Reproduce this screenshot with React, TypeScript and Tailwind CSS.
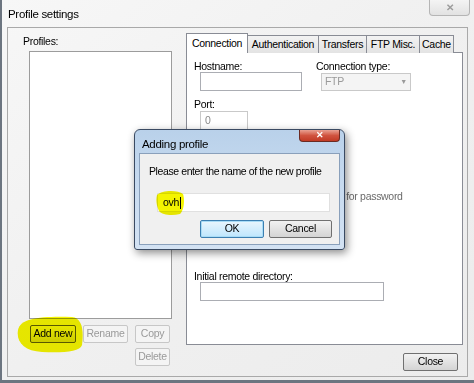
import React from "react";

const font = { fontFamily: '"Liberation Sans", Arial, sans-serif' };

const Field = ({ w, value = "", dim = false }: { w: string; value?: string; dim?: boolean }) => (
  <div
    className={`${w} h-[19px] bg-white border flex items-center pl-[4px] ${
      dim ? "border-[#c9c9c9] text-[#8a8a8a]" : "border-[#abadb3]"
    }`}
  >
    {value}
  </div>
);

const DisabledButton = ({ label, className = "" }: { label: string; className?: string }) => (
  <div
    className={`h-[18px] flex items-center justify-center rounded-[2px] border border-[#c7c7c7] bg-[#f4f4f4] text-[#9a9a9a] ${className}`}
  >
    {label}
  </div>
);

const tabs = ["Authentication", "Transfers", "FTP Misc.", "Cache"];
const tabWidths = ["w-[72px]", "w-[49px]", "w-[54px]", "w-[35px]"];

export default function App() {
  return (
    <div
      style={font}
      className="relative w-[474px] h-[383px] overflow-hidden bg-gradient-to-br from-[#f7f7f7] via-[#f0f0f0] to-[#ececec] border-l-[2px] border-b-[3px] border-[#6c7580] text-black text-[10.5px] tracking-[-0.3px]"
    >
      {/* title bar */}
      <div className="h-[27px] flex items-start justify-between">
        <div className="pl-[6px] pt-[7px] text-[11.5px] leading-[14px]">Profile settings</div>
        <div className="mr-[4px] w-[41px] h-[16px] rounded-b-[4px] border border-t-0 border-[#b5b5b5] bg-gradient-to-b from-[#f4f4f4] to-[#e2e2e2] flex items-center justify-center text-[10px] text-[#9c9c9c] font-bold">
          ✕
        </div>
      </div>

      {/* group frame */}
      <div className="ml-[5px] w-[461px] h-[350px] border border-[#a9a9a9] flex">
        {/* left column */}
        <div className="w-[172px] pl-[15px] pt-[7px] flex flex-col">
          <div className="leading-[13px]">Profiles:</div>
          <div className="ml-[6px] mt-[3px] w-[143px] h-[268px] bg-white border border-[#9c9c9c]" />
          <div className="ml-[7px] mt-[6px] grid grid-cols-[46px_45px_35px] gap-x-[7px] gap-y-[5px]">
            <div className="h-[18px] flex items-center justify-center rounded-[2px] border border-[#5c5c2c] bg-gradient-to-b from-[#f2f2f2] to-[#d6d6d6]">
              Add new
            </div>
            <DisabledButton label="Rename" />
            <DisabledButton label="Copy" />
            <DisabledButton label="Delete" className="col-start-3" />
          </div>
        </div>

        {/* right column */}
        <div className="ml-[6px] mt-[5px] w-[277px] flex flex-col">
          <div className="flex items-end h-[20px] relative z-10">
            <div className="w-[62px] h-[20px] bg-white border border-b-0 border-[#898c95] flex items-center justify-center">
              Connection
            </div>
            {tabs.map((t, i) => (
              <div
                key={t}
                className={`${tabWidths[i]} h-[18px] -ml-px first:ml-0 border border-b-0 border-[#898c95] bg-gradient-to-b from-[#f3f3f3] to-[#e3e3e3] flex items-center justify-center`}
              >
                {t}
              </div>
            ))}
          </div>
          <div className="h-[293px] -mt-px bg-white border border-[#898c95] px-[7px] pt-[7px]">
            <div className="flex">
              <div className="w-[122px]">
                <div className="leading-[12px]">Hostname:</div>
                <div className="ml-[6px]">
                  <Field w="w-[102px]" />
                </div>
              </div>
              <div>
                <div className="leading-[12px]">Connection type:</div>
                <div className="ml-[5px] mt-[1px] w-[90px] h-[18px] border border-[#c9c9c9] bg-[#f4f4f4] flex items-center justify-between px-[3px] text-[#9a9a9a]">
                  <span>FTP</span>
                  <span className="text-[7px]">▼</span>
                </div>
              </div>
            </div>
            <div className="mt-[7px] leading-[12px]">Port:</div>
            <div className="ml-[6px] mt-[1px]">
              <Field w="w-[48px]" value="0" dim />
            </div>
            <div className="mt-[60px] pl-[100px] text-[#6a6a6a] leading-[13px]">Always ask for password</div>
            <div className="mt-[67px] leading-[12px]">Initial remote directory:</div>
            <div className="ml-[6px]">
              <Field w="w-[184px]" />
            </div>
          </div>
          <div className="mt-[8px] self-end mr-[5px] w-[55px] h-[18px] rounded-[2px] border border-[#707070] bg-gradient-to-b from-[#f2f2f2] to-[#d4d4d4] flex items-center justify-center">
            Close
          </div>
        </div>
      </div>

      {/* modal dialog */}
      <div className="absolute left-[132px] top-[129px] w-[211px] h-[121px] rounded-t-[6px] rounded-b-[3px] border border-[#3a4a62] bg-gradient-to-b from-[#b9d1ea] via-[#c8dbf0] to-[#d3e2f3] shadow-[2px_3px_8px_rgba(0,0,0,0.45)] flex flex-col">
        <div className="h-[23px] flex items-start justify-between">
          <div className="pl-[7px] pt-[7px] text-[11.5px] leading-[14px]">Adding profile</div>
          <div className="mr-[4px] w-[41px] h-[12px] rounded-b-[4px] border border-t-0 border-[#6b2a22] bg-gradient-to-b from-[#e8a092] via-[#d0533f] to-[#c13a24] flex items-center justify-center text-[9px] font-bold text-white">
            ✕
          </div>
        </div>
        <div className="mx-[4px] mb-[4px] flex-1 bg-[#f0f0f0] border border-[#8aa0bb] pl-[9px] pt-[11px]">
          <div className="leading-[13px] whitespace-nowrap tracking-[-0.4px]">Please enter the name of the new profile</div>
          <div className="ml-[8px] mt-[15px] w-[173px] h-[19px] bg-white border border-[#e0e0e0] flex items-center pl-[5px]">
            ovh<span className="ml-px w-px h-[12px] bg-black" />
          </div>
          <div className="mt-[8px] ml-[51px] flex gap-[5px]">
            <div className="w-[64px] h-[18px] rounded-[2px] border border-[#3c7fb1] bg-gradient-to-b from-[#eaf6fd] to-[#bee6fd] shadow-[inset_0_0_0_1px_#a9dcf6] flex items-center justify-center">
              OK
            </div>
            <div className="w-[63px] h-[18px] rounded-[2px] border border-[#707070] bg-gradient-to-b from-[#f2f2f2] to-[#d4d4d4] flex items-center justify-center">
              Cancel
            </div>
          </div>
        </div>
      </div>

      {/* yellow marker highlights */}
      <svg className="absolute left-0 top-0 pointer-events-none mix-blend-multiply" width="474" height="383">
        <path d="M16 330 C18 318 40 316 70 317 C80 318 82 330 80 345 C78 352 60 353 40 352 C22 351 14 342 16 330 Z" fill="#f4f400" />
        <path d="M155 195 C160 190 176 190 181 194 C183 200 182 210 178 214 C170 216 160 215 157 211 C154 205 154 199 155 195 Z" fill="#f4f400" />
      </svg>
    </div>
  );
}
